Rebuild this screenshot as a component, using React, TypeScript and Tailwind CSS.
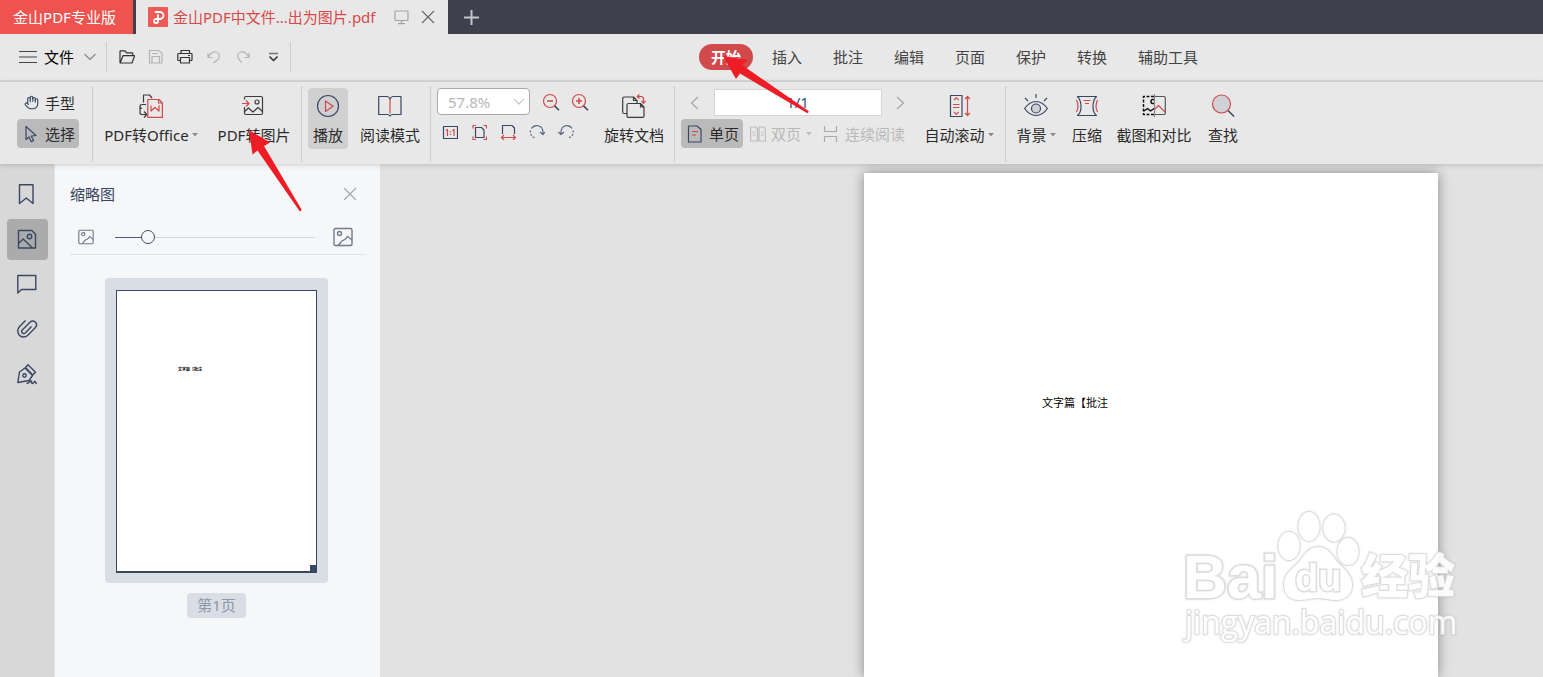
import type { ReactNode } from 'react';
import { Hand } from 'lucide-react';

const NAVY = '#3a4763';
const RED = '#d2494b';
const DARK = '#3b3b3b';
const MUTED = '#b4b4b4';

interface IconProps {
  w?: number;
  h?: number;
  color?: string;
  children: ReactNode;
}

function Icon({ w = 24, h = 24, color = DARK, children }: IconProps) {
  return (
    <svg
      width={w}
      height={h}
      viewBox={`0 0 ${w} ${h}`}
      fill="none"
      stroke={color}
      strokeWidth={1.2}
      strokeLinejoin="round"
      className="shrink-0"
      aria-hidden="true"
    >
      {children}
    </svg>
  );
}

function Caret({ muted = false }: { muted?: boolean }) {
  return (
    <svg width="6" height="4" viewBox="0 0 6 4" className="shrink-0" aria-hidden="true">
      <path d="M0 0h6L3 3.5z" fill={muted ? '#bdbdbd' : '#8a8a8a'} />
    </svg>
  );
}

function Divider({ className }: { className: string }) {
  return <div className={`w-px shrink-0 bg-[#cccccc] ${className}`} />;
}

interface BigButtonProps {
  label: string;
  className: string;
  icon: ReactNode;
  caret?: boolean;
  active?: boolean;
}

function BigButton({ label, className, icon, caret, active }: BigButtonProps) {
  return (
    <button
      type="button"
      className={`flex shrink-0 flex-col items-center rounded pt-1.5 pb-1 whitespace-nowrap ${
        active ? 'bg-[#d0d0d0]' : ''
      } ${className}`}
    >
      {icon}
      <span className="mt-[7px] flex items-center gap-[3px] leading-5">
        {label}
        {caret && <Caret />}
      </span>
    </button>
  );
}

function TitleBar() {
  return (
    <header className="flex h-[34px] shrink-0 bg-[#3e404d]">
      <button type="button" className="mr-[3px] w-[133px] shrink-0 bg-[#ee5350] pr-1 text-white">
        金山PDF专业版
      </button>
      <div className="flex w-[312px] shrink-0 items-center bg-[#e8e8e8] pl-3 text-[#d9484a]">
        <svg width="20" height="20" viewBox="0 0 20 20" className="mr-[5px] shrink-0" aria-hidden="true">
          <rect width="20" height="20" rx="1" fill="#ee5a58" />
          <path
            d="M7.5 5h4.500a3.500 3.500 0 0 1 0 7H8a2 2 0 1 0 2 2V8"
            fill="none"
            stroke="#fff"
            strokeWidth="1.8"
            strokeLinecap="round"
          />
        </svg>
        <span className="w-[205px] whitespace-nowrap">金山PDF中文件...出为图片.pdf</span>
        <button type="button" aria-label="窗口" className="ml-4">
          <Icon w={15} h={15} color="#a3a3a3">
            <rect x="1" y="1" width="13" height="9.5" rx="1" />
            <path d="M7.5 10.5v3M4 13.7h7" />
          </Icon>
        </button>
        <button type="button" aria-label="关闭标签" className="ml-3">
          <Icon w={14} h={14} color="#6b6b6b">
            <path d="M1 1l12 12M13 1 1 13" />
          </Icon>
        </button>
      </div>
      <button type="button" aria-label="新建标签" className="ml-4">
        <Icon w={15} h={15} color="#c3c4c9">
          <path d="M7.5 0v15M0 7.5h15" strokeWidth="2" />
        </Icon>
      </button>
    </header>
  );
}

const MENU = ['插入', '批注', '编辑', '页面', '保护', '转换', '辅助工具'];

function MenuBar() {
  return (
    <div className="flex h-12 shrink-0 items-center border-b-2 border-[#d8d8d8] pl-[19px] whitespace-nowrap">
      <button type="button" className="flex items-center text-black">
        <Icon w={18} h={14} color="#444">
          <path d="M0 1.5h18M0 7h18M0 12.5h18" />
        </Icon>
        <span className="mr-2.5 ml-[7px]">文件</span>
        <Icon w={12} h={8} color="#8a8a8a">
          <path d="M.5 1 6 6.5 11.5 1" />
        </Icon>
      </button>
      <Divider className="mr-3 ml-2.5 h-[30px]" />
      <div className="flex items-center gap-[13px]">
        <button type="button" aria-label="打开">
          <Icon w={16} h={16} color="#333">
            <path d="M1 13.5V2.5Q1 1.8 1.8 1.8H6l1.5 2H13q.8 0 .8.8V6.5M1.2 14 4 6.7h11.7L13 14z" />
          </Icon>
        </button>
        <button type="button" aria-label="保存">
          <Icon w={16} h={16} color={MUTED}>
            <path d="M1.5 1.5h9.500l3 3v9.500H1.5zM4 14V7.5h7.500V14M4 4.500h6" />
          </Icon>
        </button>
        <button type="button" aria-label="打印">
          <Icon w={16} h={16} color="#333">
            <path d="M4 4.5V1.5h8.5v3M3.5 11.5h-2a.7.7 0 0 1-.7-.7V5.3q0-.8.8-.8h12.6q.8 0 .8.8v5.5q0 .7-.7.7h-2M3.5 8.5h9V14h-9zM11 6.5h2" />
          </Icon>
        </button>
        <button type="button" aria-label="撤销">
          <Icon w={16} h={16} color={MUTED}>
            <path d="M2 4v4.5h4.5M2.2 8.3C4 4.5 7 2.5 10 3c3.6.7 4.4 4.6 2 7.5L7.5 14" />
          </Icon>
        </button>
        <button type="button" aria-label="重做">
          <Icon w={16} h={16} color={MUTED}>
            <path d="M14 4v4.5H9.5M13.8 8.3C12 4.5 9 2.500 6 3 2.400 3.700 1.600 7.600 4 10.500L6.500 13.500" />
          </Icon>
        </button>
        <button type="button" aria-label="更多" className="ml-px">
          <Icon w={16} h={16} color="#333">
            <path d="M4 4.500h9" stroke="#777" strokeWidth="1.6" />
            <path d="M4.500 7.500l4 4 4-4" strokeWidth="1.6" />
          </Icon>
        </button>
      </div>
      <Divider className="ml-[9px] h-[30px]" />
      <nav className="flex flex-1 justify-center gap-[7px] pl-[75px]">
        <button type="button" className="h-[26px] rounded-full bg-[#d04a4b] px-3 font-bold text-white">
          开始
        </button>
        {MENU.map((item) => (
          <button type="button" key={item} className="h-[26px] px-3 text-[#444]">
            {item}
          </button>
        ))}
      </nav>
    </div>
  );
}

function ZoomGroup() {
  return (
    <div className="ml-1.5 w-[157px] shrink-0">
      <div className="flex items-center">
        <div className="relative">
          <select
            aria-label="缩放比例"
            className="h-[27px] w-[93px] appearance-none rounded border border-[#a8a8a8] bg-white pl-2.5 text-[#b8b8b8]"
          >
            <option>57.8%</option>
          </select>
          <div className="pointer-events-none absolute top-2.5 right-1.5">
            <Icon w={10} h={7} color="#c8c8c8">
              <path d="M0 1l5 5 5-5" />
            </Icon>
          </div>
        </div>
        <button type="button" aria-label="缩小" className="ml-3">
          <Icon w={18} h={18}>
            <path d="m12.300 12.600 4.700 4.700" stroke={NAVY} strokeWidth="1.6" />
            <circle cx="8" cy="8" r="6.5" stroke={RED} />
            <path d="M5 8h6" stroke={RED} strokeWidth="1.6" />
          </Icon>
        </button>
        <button type="button" aria-label="放大" className="ml-[11px]">
          <Icon w={18} h={18}>
            <path d="m12.300 12.600 4.700 4.700" stroke={NAVY} strokeWidth="1.6" />
            <circle cx="8" cy="8" r="6.5" stroke={RED} />
            <path d="M5 8h6M8 5v6" stroke={RED} strokeWidth="1.6" />
          </Icon>
        </button>
      </div>
      <div className="mt-[9px] flex gap-[13px] pl-[5px]">
        <button type="button" aria-label="实际大小">
          <Icon w={16} h={16} color={NAVY}>
            <path d="M1.5 2.5h14v12h-14z" />
            <path d="M4 6.5l1.5-1V12M10.500 6.5l1.500-1V12M8.500 7v1.300M8.500 9.700V11" stroke={RED} />
          </Icon>
        </button>
        <button type="button" aria-label="适合页面">
          <Icon w={16} h={16} color={NAVY}>
            <path d="M4.500 3.500H10.500L13 6v7.500H4.500z" />
            <path d="M2 4.500V1.500h3M12.500 1.500h3v3M15.500 12.500v3h-3M5 15.500H2v-3" stroke={RED} />
          </Icon>
        </button>
        <button type="button" aria-label="适合宽度">
          <Icon w={16} h={16} color={NAVY}>
            <path d="M2.500 10V1.500H12l2.500 2.500v6" />
            <path d="M1.500 13.500h14M4 11l-2.500 2.500L4 16M13 11l2.500 2.500L13 16" stroke={RED} />
          </Icon>
        </button>
        <button type="button" aria-label="顺时针旋转">
          <Icon w={16} h={16} color="#59657c">
            <path d="M2.500 4.500C5.500 0 13.500.5 14 8v2M11 8l3 2.500L16 8" />
            <path d="M1.500 6.500c-.8 3.500 1 6.500 5 7.500" strokeDasharray="2 1.5" />
          </Icon>
        </button>
        <button type="button" aria-label="逆时针旋转">
          <Icon w={16} h={16} color="#59657c">
            <path d="M14 4.500C11 0 3.500.5 3 8v2M6 8l-3 2.500L.5 8" />
            <path d="M15 6.500c.8 3.500-1 6.500-5 7.500" strokeDasharray="2 1.5" />
          </Icon>
        </button>
      </div>
    </div>
  );
}

function PageGroup() {
  return (
    <div className="ml-1.5 w-[228px] shrink-0">
      <div className="flex h-[29px] items-center justify-between pr-1 pl-[9px]">
        <button type="button" aria-label="上一页">
          <Icon w={9} h={14} color="#a5a5a5">
            <path d="M8 1 1.500 7 8 13" />
          </Icon>
        </button>
        <input
          aria-label="页码"
          defaultValue="1/1"
          className="h-[27px] w-[168px] border border-[#d5d5d5] bg-white pb-0.5 text-center text-[#35507c]"
        />
        <button type="button" aria-label="下一页">
          <Icon w={9} h={14} color="#a5a5a5">
            <path d="M1 1l6.500 6L1 13" />
          </Icon>
        </button>
      </div>
      <div className="mt-0.5 flex items-center">
        <button type="button" className="flex h-[29px] w-[62px] items-center gap-1.5 rounded bg-[#bababa] pl-1.5">
          <Icon w={16} h={18} color={NAVY}>
            <path d="M1.500 1h8.500L14 4.500V17H1.500z" />
            <path d="M5 6.500h6M5 10h4" stroke={RED} />
          </Icon>
          单页
        </button>
        <button type="button" className="ml-[7px] flex items-center gap-[5px] text-[#b8b8b8]">
          <Icon w={16} h={16} color="#bdbdbd">
            <path d="M.6 1h4.900L7.500 3v12H.6zM9 1h4.500L15.500 3v12H9zM2.500 6h3M2.500 9h3M11 6h3M11 9h3" />
          </Icon>
          <span>双页</span>
          <Caret muted />
        </button>
        <button type="button" className="ml-[11px] flex items-center gap-[7px] whitespace-nowrap text-[#b8b8b8]">
          <Icon w={15} h={16} color="#aaa">
            <path d="M1.500 0v5.500h12V0M1.500 16v-5.500h12V16" />
          </Icon>
          连续阅读
        </button>
      </div>
    </div>
  );
}

function Ribbon() {
  return (
    <div className="relative z-10 flex h-[82px] shrink-0 items-start bg-[#e8e8e8] pt-1.5 pl-[17px] shadow-[0_1px_5px_rgba(0,0,0,0.18)]">
      <div className="w-[62px] shrink-0">
        <button type="button" className="flex h-[29px] w-full items-center gap-1.5 pl-[7px]">
          <Hand size={15} strokeWidth={1.8} color={NAVY} />
          手型
        </button>
        <button type="button" className="mt-0.5 flex h-[29px] w-full items-center gap-1.5 rounded bg-[#bababa] pl-1.5">
          <Icon w={16} h={18} color={NAVY}>
            <path d="M3 1.500v13l3-2.500 2.200 4.700 2.300-1.100-2.300-4.500 4.800-.6z" />
          </Icon>
          选择
        </button>
      </div>
      <Divider className="-mt-0.5 ml-[13px] h-[76px]" />
      <BigButton
        label="PDF转Office"
        caret
        className="ml-[7px] w-[102px]"
        icon={
          <Icon>
            <path d="M4.500 8.500V1h6L13 4M7 10.500H3.500Q1 10.500 1 12.500T3 14.500M1 13v5.500Q1 20.500 3 20.500H7.500M5 17.500l2.800 3L5 23.500" />
            <path d="M8.800 5.500H20L23.400 9v14.400H8.800zM19.500 5.700V9h3.700" stroke={RED} />
            <path d="M12 11.500V17l4-3.500 4 3.500v-5.500" stroke={RED} />
          </Icon>
        }
      />
      <BigButton
        label="PDF转图片"
        className="ml-3 w-[80px]"
        icon={
          <Icon>
            <path d="M2.500 5.500V4q0-1.500 1.500-1.500h15Q20.500 2.500 20.500 4v15q0 1.500-1.500 1.500H4Q2.500 20.500 2.500 19v-6" />
            <circle cx="15" cy="8" r="2" />
            <path d="M2.500 17.500l4-3.500 4.500 4 5-4.500 4.500 4" />
            <path d="M0 9.500h6.500M4 6.500l3 3-3 3" stroke={RED} />
          </Icon>
        }
      />
      <Divider className="-mt-0.5 ml-[7px] h-[76px]" />
      <BigButton
        label="播放"
        active
        className="ml-1.5 w-10"
        icon={
          <Icon>
            <circle cx="12" cy="12" r="10.5" stroke={NAVY} />
            <path d="M9.500 7v10.500l7.500-5.300z" stroke={RED} />
          </Icon>
        }
      />
      <BigButton
        label="阅读模式"
        className="ml-2 w-[68px]"
        icon={
          <Icon color={NAVY}>
            <path d="M12 5Q11 2.500 9 2.500H.7V20.500h8.800q1.500 0 2.500 1.500 1-1.500 2.500-1.500H23V2.500H15Q13 2.500 12 5z" />
            <path d="M12 5v14.500" stroke={RED} />
          </Icon>
        }
      />
      <Divider className="-mt-0.5 ml-1.5 h-[76px]" />
      <ZoomGroup />
      <BigButton
        label="旋转文档"
        className="ml-1.5 w-[68px]"
        icon={
          <Icon>
            <path d="M5 19.500H2Q.7 19.500.7 18V4.500Q.7 3 2 3h9.500L15 6.500v3M11.500 3v3.500H15" />
            <path d="M6.500 9.500h12L22 13v9q0 1.300-1.300 1.300H6.300Q5 23.300 5 22V11q0-1.500 1.500-1.500zM18.500 9.500V13H22" />
            <path d="M15.500 2.500H19Q21.500 2.500 21.500 5v4M17.500.5l-2.300 2 2.300 2M19.500 7l2 2.300 2-2.300" stroke={RED} />
          </Icon>
        }
      />
      <Divider className="-mt-0.5 ml-1.5 h-[76px]" />
      <PageGroup />
      <BigButton
        label="自动滚动"
        caret
        className="ml-3 w-[76px]"
        icon={
          <Icon>
            <path d="M3.500 1.500h11.500v21H3.500z" stroke={NAVY} />
            <path d="M7 6l2.300-2.300L11.600 6M7 18l2.300 2.300 2.300-2.300M6 10.500h6.500M6 13.500h6.500M20.500 2.500v19M18.200 5l2.300-2.500L22.800 5M18.200 19l2.300 2.500 2.300-2.500" stroke={RED} />
          </Icon>
        }
      />
      <Divider className="-mt-0.5 ml-2 h-[76px]" />
      <BigButton
        label="背景"
        caret
        className="ml-[7px] w-[46px]"
        icon={
          <Icon color={NAVY}>
            <path d="M.6 14.500Q5.500 7.500 12 7.500t11.400 7Q18.500 21.500 12 21.500T.6 14.500z" />
            <circle cx="12" cy="14.5" r="4.5" fill="#cdced2" />
            <path d="M12 0v4M1 4l3 3M23 4l-3 3" />
          </Icon>
        }
      />
      <BigButton
        label="压缩"
        className="ml-[9px] w-[38px]"
        icon={
          <Icon color={NAVY}>
            <path d="M2.500 2.500h19Q18 6 18 12.500t3.500 9h-19Q6 19 6 12.500T2.500 2.500z" />
            <path d="M8.500 6.500h7M10 9.500h4M1.500 6q3 6.500 0 12M22.500 6q-3 6.500 0 12" stroke={RED} />
          </Icon>
        }
      />
      <BigButton
        label="截图和对比"
        className="ml-1.5 w-[84px]"
        icon={
          <Icon>
            <path d="M12 2.500H1.500V20.500H12" stroke="#111" strokeWidth="1.5" strokeDasharray="3 1.5" />
            <path d="M12 5.500H10.500Q9 5.500 9 7.500T10.500 9.500H12M2 17l3.500-2.500 3 2.500L12 14.500" stroke="#111" strokeWidth="1.5" />
            <path d="M12 2.500h10q1.300 0 1.300 1.300V19.200q0 1.300-1.300 1.300H12" stroke="#555" />
            <path d="M12.500 0v23" stroke="#888" />
            <path d="M12.500 15.500l4-4 6.500 6.500" stroke={RED} />
          </Icon>
        }
      />
      <BigButton
        label="查找"
        className="ml-2 w-[38px]"
        icon={
          <Icon>
            <circle cx="10.500" cy="10" r="9" fill="#d0d1d6" stroke={RED} />
            <path d="M17 16.500l6 6" stroke={NAVY} strokeWidth="1.6" />
          </Icon>
        }
      />
    </div>
  );
}

const SIDE_BUTTON = 'flex size-[41px] items-center justify-center rounded';

function SideBar() {
  return (
    <aside className="flex w-[55px] shrink-0 flex-col gap-1 border-r border-[#e2e4e8] bg-[#d8d8d8] pt-2.5 pl-[7px]">
      <button type="button" aria-label="书签" className={SIDE_BUTTON}>
        <Icon w={21} h={21} color={NAVY}>
          <path d="M2.500.8h13.500v18.700l-6.700-5.500-6.800 5.500z" strokeWidth="1.4" />
        </Icon>
      </button>
      <button type="button" aria-label="缩略图" className={`bg-[#ababab] ${SIDE_BUTTON}`}>
        <Icon w={21} h={21} color={NAVY}>
          <path d="M1.500 1.500h13.300l3.700 3.700v13.800h-17zM1.500 14.500 6.200 10l9.300 9" strokeWidth="1.4" />
          <circle cx="12.500" cy="7.500" r="2.200" strokeWidth="1.4" />
        </Icon>
      </button>
      <button type="button" aria-label="批注" className={SIDE_BUTTON}>
        <Icon w={21} h={21} color={NAVY}>
          <path d="M.8 1.500h18v14H4.500L.8 19z" strokeWidth="1.4" />
        </Icon>
      </button>
      <button type="button" aria-label="附件" className={SIDE_BUTTON}>
        <Icon w={21} h={21} color={NAVY}>
          <path
            d="M8.500 1.500 2.800 7.200C-1 11 1 18 6.500 18q2.500 0 4-1.500L18 9c4-4-1-9.500-5-5.800L5.500 10.700c-2.200 2.200.8 5.300 3 3.100L14.500 7.500"
            strokeWidth="1.4"
          />
        </Icon>
      </button>
      <button type="button" aria-label="签名" className={SIDE_BUTTON}>
        <Icon w={21} h={21} color={NAVY}>
          <path
            d="M.8 18.500 2.500 8 8 4l7.500 7.500L12 16.500zM8.500 3.500 11 .8l7.500 7.500-2.700 2.700zM9.500 19.500c2.500 0 4.500-3.500 5-2.500s-.5 2.500 1 2.500 1.500-2.500 2.500-2 0 2 2 2"
            strokeWidth="1.4"
          />
          <circle cx="7.500" cy="11.500" r="1.700" strokeWidth="1.4" />
        </Icon>
      </button>
    </aside>
  );
}

function PictureIcon({ size }: { size: number }) {
  return (
    <svg
      width={size}
      height={size}
      viewBox="0 0 20 20"
      fill="none"
      stroke="#6f7a8c"
      strokeWidth="1.4"
      className="shrink-0"
      aria-hidden="true"
    >
      <rect x="1" y="1.5" width="18" height="17" rx="1.5" />
      <circle cx="6.500" cy="6.5" r="2" />
      <path d="M5 18.500c2-1.500 2-3 4-4.500s3 0 5.500-4.500L19 13" />
    </svg>
  );
}

function ThumbnailPanel() {
  return (
    <section className="flex w-[326px] shrink-0 flex-col border-r border-[#dfe1e5] bg-[#f6f7f9] px-[15px]">
      <div className="flex h-[60px] shrink-0 items-center justify-between pr-2">
        <h2 className="text-[#39455f]">缩略图</h2>
        <button type="button" aria-label="关闭面板">
          <Icon w={14} h={14} color="#a3a8b0">
            <path d="M1 1l12 12M13 1 1 13" />
          </Icon>
        </button>
      </div>
      <div className="flex h-[31px] shrink-0 items-center border-b border-[#e0e2e6] pb-1 pl-2">
        <PictureIcon size={16} />
        <input
          type="range"
          aria-label="缩略图大小"
          defaultValue={14}
          className="mr-[18px] ml-[21px] h-4 w-[200px] appearance-none bg-[linear-gradient(to_right,#4a5a78_16%,#d3d7de_16%)] bg-[length:100%_1px] bg-center bg-no-repeat [&::-webkit-slider-thumb]:size-3.5 [&::-webkit-slider-thumb]:appearance-none [&::-webkit-slider-thumb]:rounded-full [&::-webkit-slider-thumb]:border [&::-webkit-slider-thumb]:border-solid [&::-webkit-slider-thumb]:border-[#3f4d69] [&::-webkit-slider-thumb]:bg-[#f6f7f9]"
        />
        <PictureIcon size={20} />
      </div>
      <button
        type="button"
        aria-label="第1页缩略图"
        className="mt-[23px] ml-[35px] w-[223px] shrink-0 rounded bg-[#d9dee5] px-[11px] pt-3 pb-2.5"
      >
        <span className="flex h-[283px] flex-col border border-b-2 border-[#3a4660] bg-white pt-[75px] text-left">
          <span className="ml-[61px] text-[4px] leading-[8px] font-bold text-black">文字篇【批注</span>
          <span className="mt-auto size-[6px] self-end bg-[#3a4660]" />
        </span>
      </button>
      <div className="mt-2.5 ml-[117px] w-[59px] shrink-0 rounded bg-[#d9dee5] text-center leading-[25px] text-[#8d96a5]">
        第1页
      </div>
    </section>
  );
}

function Watermark() {
  return (
    <svg
      width="290"
      height="150"
      viewBox="0 0 290 150"
      className="absolute top-[335px] left-[316px] [filter:drop-shadow(0_0_1px_rgba(0,0,0,0.15))]"
      fill="#fff"
      stroke="#dadada"
      strokeWidth="2"
      paintOrder="stroke"
      opacity="0.9"
      aria-hidden="true"
    >
      <text x="3" y="90" className="font-['Liberation_Sans',sans-serif] text-[61px] font-bold" strokeWidth="3">
        Bai
      </text>
      <ellipse cx="109" cy="38" rx="10.5" ry="14" />
      <ellipse cx="129" cy="18.5" rx="10.5" ry="14.5" />
      <ellipse cx="154" cy="20" rx="10.5" ry="13.5" />
      <ellipse cx="168" cy="43.5" rx="10.5" ry="13.5" />
      <path d="M138 39C128 39 124 48 118 55c-5 5-14 11-14 22 0 9 6 15 15 15 7 0 12-2 19-2s12 2 18 2c10 0 16-6 16-15 0-11-9-17-14-22-6-7-9-16-20-16z" />
      <text x="115" y="83" className="font-['Liberation_Sans',sans-serif] text-[38px] font-bold" strokeWidth="3">
        du
      </text>
      <text x="181" y="85" className="font-['Noto_Sans_CJK_SC',sans-serif] text-[47px] font-black">
        经验
      </text>
      <text x="5" y="126" className="font-['Open_Sans',sans-serif] text-[32px]">
        jingyan.baidu.com
      </text>
    </svg>
  );
}

function Canvas() {
  return (
    <main className="flex min-w-0 flex-1 justify-end overflow-hidden bg-[#e2e2e2] pt-[9px] pr-[105px]">
      <div className="relative w-[574px] shrink-0 bg-white pt-[220px] pl-[178px] shadow-[0_0_12px_rgba(0,0,0,0.4)]">
        <p className="font-['Liberation_Serif','Noto_Sans_CJK_SC',serif] text-[11px] leading-5 text-black">
          文字篇【批注
        </p>
        <Watermark />
      </div>
    </main>
  );
}

// red pointers drawn over the toolbar
function Pointers() {
  return (
    <svg
      width="830"
      height="220"
      viewBox="0 0 830 220"
      fill="#ee1c25"
      className="pointer-events-none absolute top-0 left-0 z-20"
      aria-hidden="true"
    >
      <path d="M723 56 748 60 742 65 808.5 111Q809 113 807 113L740 73.500 736 79z" />
      <path d="M249 130 270 142.500 264 146 301.500 209.500Q301.500 212 299.500 211L257.500 150.500 252.500 154.500z" />
    </svg>
  );
}

export default function App() {
  return (
    <div className="relative flex h-screen flex-col overflow-hidden bg-[#e8e8e8] font-['Noto_Sans','Noto_Sans_CJK_SC',sans-serif] text-[15px] leading-5 text-[#2b2b2b]">
      <TitleBar />
      <MenuBar />
      <Ribbon />
      <div className="flex min-h-0 flex-1">
        <SideBar />
        <ThumbnailPanel />
        <Canvas />
      </div>
      <Pointers />
    </div>
  );
}
